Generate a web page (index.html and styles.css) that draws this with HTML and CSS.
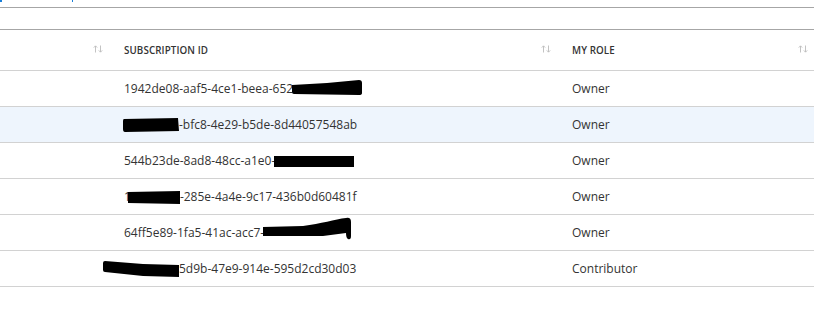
FILE: index.html
```html
<!DOCTYPE html>
<html>
<head>
<meta charset="utf-8">
<link rel="stylesheet" href="styles.css">
</head>
<body>
<div class="page">
  <div class="linkstrip"><span class="mark m1"></span><span class="mark m2"></span></div>
  <div class="toolbar"></div>
  <div class="table">
    <div class="row head">
      <div class="cell c1"><svg class="sort" viewBox="0 0 10 8" width="10" height="8"><path d="M2.5 7.5V1M0.8 2.6L2.5 0.8L4.2 2.6M7.5 0.5V7M5.8 5.4L7.5 7.2L9.2 5.4"/></svg></div>
      <div class="cell c2"><span class="htext">SUBSCRIPTION ID</span><svg class="sort" viewBox="0 0 10 8" width="10" height="8"><path d="M2.5 7.5V1M0.8 2.6L2.5 0.8L4.2 2.6M7.5 0.5V7M5.8 5.4L7.5 7.2L9.2 5.4"/></svg></div>
      <div class="cell c3"><span class="htext">MY ROLE</span><svg class="sort" viewBox="0 0 10 8" width="10" height="8"><path d="M2.5 7.5V1M0.8 2.6L2.5 0.8L4.2 2.6M7.5 0.5V7M5.8 5.4L7.5 7.2L9.2 5.4"/></svg></div>
    </div>
    <div class="row">
      <div class="cell c1"></div>
      <div class="cell c2"><span class="id">1942de08-aaf5-4ce1-beea-652</span><svg class="redact r1" width="70" height="15" viewBox="0 0 70 15"><path d="M0 5 L35 3 L67 0 Q70 0 70 3 L70 13 Q70 15 67 15 L2 14 Q0 14 0 12 Z"/></svg></div>
      <div class="cell c3">Owner</div>
    </div>
    <div class="row selected">
      <div class="cell c2"><svg class="redact r2" width="56" height="14" viewBox="0 0 56 14"><path d="M1 1 L55 0 L56 13 L2 14 Q0 14 0 11 L0 3 Q0 1 1 1 Z"/></svg><span class="id">-bfc8-4e29-b5de-8d44057548ab</span></div>
      <div class="cell c3">Owner</div>
    </div>
    <div class="row">
      <div class="cell c2"><span class="id">544b23de-8ad8-48cc-a1e0-</span><svg class="redact r3" width="80" height="11" viewBox="0 0 80 11"><rect width="80" height="11"/></svg></div>
      <div class="cell c3">Owner</div>
    </div>
    <div class="row">
      <div class="cell c2"><span class="id">1</span><svg class="redact r4" width="52" height="13" viewBox="0 0 52 13"><path d="M0 1 L52 0 L52 13 L0 12 Z"/></svg><span class="id">-285e-4a4e-9c17-436b0d60481f</span></div>
      <div class="cell c3">Owner</div>
    </div>
    <div class="row">
      <div class="cell c2"><span class="id">64ff5e89-1fa5-41ac-acc7-</span><svg class="redact r5" width="88" height="24" viewBox="0 0 88 24"><path d="M0 11 L40 10 C58 8 72 3 83 2 Q88 1 88 6 L88 20 Q88 24 85 23 Q83 22 83 17 L60 20 L0 20 Z"/></svg></div>
      <div class="cell c3">Owner</div>
    </div>
    <div class="row">
      <div class="cell c2"><svg class="redact r6" width="76" height="17" viewBox="0 0 76 17"><path d="M0 2 Q0 0 2 0 L40 3 L76 4 L76 16 L40 15 L2 11 Q0 11 0 9 Z"/></svg><span class="id">5d9b-47e9-914e-595d2cd30d03</span></div>
      <div class="cell c3">Contributor</div>
    </div>
  </div>
</div>
</body>
</html>
```
FILE: styles.css
```css
html, body {
  margin: 0;
  padding: 0;
  background: #fff;
  overflow: hidden;
}
body {
  font-family: "Open Sans", "Noto Sans", sans-serif;
  color: #333;
}
.page {
  width: 820px;
}
.linkstrip {
  height: 7px;
  display: flex;
  align-items: flex-start;
}
.mark {
  display: block;
  height: 2px;
  background: #1a7fd8;
}
.m1 { width: 2px; }
.m2 { width: 1px; margin-left: 70px; }
.toolbar {
  height: 21px;
  border-top: 1px solid #a6a6a6;
  border-bottom: 1px solid #a6a6a6;
}
.table {
  display: flex;
  flex-direction: column;
}
.row {
  display: grid;
  grid-template-columns: 114px 448px 258px;
  height: 35px;
  border-bottom: 1px solid #d2d2d2;
  font-size: 12px;
}
.row.head {
  height: 40px;
}
.row.selected {
  background: #eef5fd;
}
.cell {
  display: flex;
  align-items: center;
  padding-left: 10px;
  white-space: nowrap;
}
.row .c2 { grid-column: 2; }
.row .c3 { grid-column: 3; }
.head .cell {
  justify-content: space-between;
  padding-right: 11px;
}
.head .c1 { justify-content: flex-end; }
.head .c3 { padding-right: 12px; }
.htext {
  font-size: 9.8px;
  font-weight: 600;
  color: #333;
  letter-spacing: 0.1px;
}
.sort {
  display: block;
  margin-top: -3px;
}
.sort path {
  fill: none;
  stroke: #bcbcbc;
  stroke-width: 0.9;
}
.id {
  color: #333;
}
.redact {
  display: block;
  flex: none;
}
.redact path, .redact rect { fill: #000; }
.r1 { margin-left: -1px; margin-top: -2px; }
.r2 { margin-left: -1px; }
.r3 { margin-left: -1px; margin-top: 1px; }
.r4 { margin-left: -3px; margin-top: 1px; }
.r5 { margin-left: -1px; margin-top: -9px; }
.r6 { margin-left: -21px; margin-top: 2px; }
```
